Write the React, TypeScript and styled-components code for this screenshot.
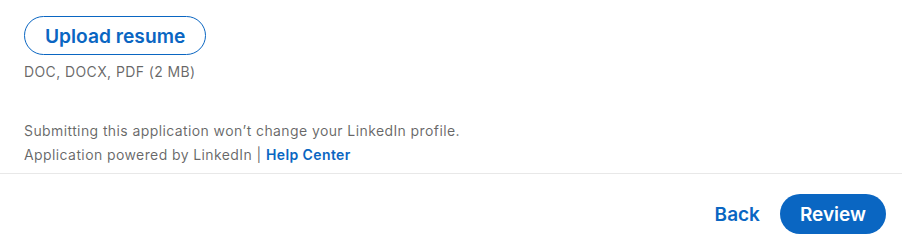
import React from "react";
import styled, { createGlobalStyle } from "styled-components";

const GlobalStyle = createGlobalStyle`
  html, body {
    margin: 0;
    padding: 0;
    background: #ffffff;
  }
  body {
    font-family: Inter, "Liberation Sans", Arial, sans-serif;
    -webkit-font-smoothing: antialiased;
  }
`;

const App: React.FC = () => {
  return (
    <>
      <GlobalStyle />
      <Modal>
        <Content>
          <UploadSection>
            <OutlineButton type="button">Upload resume</OutlineButton>
            <Hint>DOC, DOCX, PDF (2 MB)</Hint>
          </UploadSection>
          <Notice>
            <p>Submitting this application won’t change your LinkedIn profile.</p>
            <p>
              Application powered by LinkedIn | <HelpLink href="#">Help Center</HelpLink>
            </p>
          </Notice>
        </Content>
        <Footer>
          <TextButton type="button">Back</TextButton>
          <PrimaryButton type="button">Review</PrimaryButton>
        </Footer>
      </Modal>
    </>
  );
};

const Modal = styled.div`
  width: 902px;
  height: 246px;
  display: flex;
  flex-direction: column;
  background: #ffffff;
  overflow: hidden;
`;

const Content = styled.div`
  padding: 16px 24px 6px;
  display: flex;
  flex-direction: column;
  gap: 37px;
`;

const UploadSection = styled.div`
  display: flex;
  flex-direction: column;
  align-items: flex-start;
  gap: 7px;
`;

const OutlineButton = styled.button`
  height: 39px;
  padding: 0 20px;
  border: 1px solid #0a66c2;
  border-radius: 20px;
  background: #ffffff;
  color: #0a66c2;
  font-family: inherit;
  font-size: 19.2px;
  font-weight: 600;
  cursor: pointer;
`;

const Hint = styled.span`
  font-size: 14px;
  line-height: 20px;
  letter-spacing: 0.4px;
  color: rgba(0, 0, 0, 0.6);
`;

const Notice = styled.div`
  p {
    margin: 0;
    font-size: 14px;
    line-height: 24px;
    letter-spacing: 0.4px;
    color: rgba(0, 0, 0, 0.6);
  }
`;

const HelpLink = styled.a`
  color: #0a66c2;
  font-weight: 600;
  text-decoration: none;
`;

const Footer = styled.div`
  border-top: 1px solid #e8e8e8;
  padding: 20px 16px 12px;
  display: flex;
  justify-content: flex-end;
  align-items: center;
  gap: 20px;
`;

const TextButton = styled.button`
  border: none;
  background: none;
  padding: 0;
  color: #0a66c2;
  font-family: inherit;
  font-size: 19px;
  font-weight: 600;
  cursor: pointer;
`;

const PrimaryButton = styled.button`
  height: 40px;
  padding: 0 20px;
  border: none;
  border-radius: 20px;
  background: #0a66c2;
  color: #ffffff;
  font-family: inherit;
  font-size: 19px;
  font-weight: 600;
  cursor: pointer;
`;

export default App;
